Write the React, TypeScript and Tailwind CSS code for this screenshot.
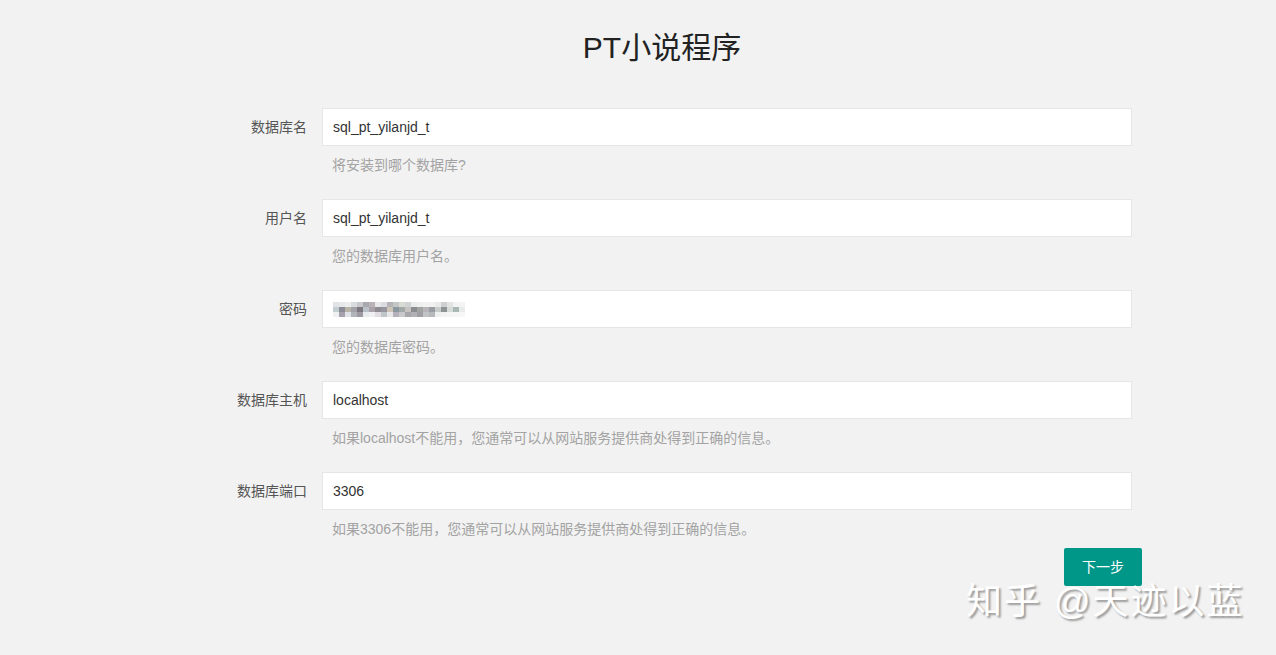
const fields = [
  { label: "数据库名", value: "sql_pt_yilanjd_t", hint: "将安装到哪个数据库?" },
  { label: "用户名", value: "sql_pt_yilanjd_t", hint: "您的数据库用户名。" },
  { label: "密码", value: "", hint: "您的数据库密码。", masked: true },
  { label: "数据库主机", value: "localhost", hint: "如果localhost不能用，您通常可以从网站服务提供商处得到正确的信息。" },
  { label: "数据库端口", value: "3306", hint: "如果3306不能用，您通常可以从网站服务提供商处得到正确的信息。" },
];

// pixelated blur of the password value
const blurTop = ["#dfe3e6", "#e6e8ea", "#eceeee", "#d8dcdf", "#c7c9cc", "#a8a8b0", "#b9b2b7", "#e8e8ea", "#dadcdf", "#b5b3b8", "#c2c6c4", "#d9dbd5", "#cfd3d4", "#e9ebec", "#eef0ef", "#f2f2f2", "#f1f1f1", "#eaeaea", "#cfd0d1", "#e2e4e4", "#f3f3f3", "#f4f4f4"];
const blurMid = ["#c3cdd2", "#8c8c98", "#b8b5a8", "#a3a1a8", "#7d7880", "#b8c2c8", "#a9a2aa", "#8e8b93", "#9795a0", "#ccc4b4", "#8c98a0", "#a1a9a9", "#c5c4c2", "#8a8c90", "#a0a4a2", "#b7b5ba", "#9a9ea4", "#c8ccca", "#8e9494", "#d7dcd8", "#aab8b5", "#e7ebea"];
const blurBot = ["#eef0f1", "#a7a0ad", "#dfe2e6", "#b2b4bc", "#9e9aa3", "#e9ecef", "#f0f0f2", "#e2dce3", "#bfc6ca", "#e8e8ea", "#b6b0bb", "#c9c9cc", "#a7a7ac", "#b2b2b6", "#a0a0a4", "#c2c3c5", "#b5b9bb", "#eef0f0", "#f2f2f2", "#f5f5f5", "#f6f6f6", "#f7f7f7"];

function Masked() {
  return (
    <div className="flex flex-col">
      {[blurTop, blurMid, blurBot].map((row, r) => (
        <div key={r} className="flex">
          {row.map((c, i) => (
            <span key={i} className="block w-[6px] h-[5px]" style={{ background: c }} />
          ))}
        </div>
      ))}
    </div>
  );
}

export default function App() {
  return (
    <div
      className="relative w-full min-h-[655px] bg-[#f2f2f2] overflow-hidden"
      style={{ fontFamily: '"Liberation Sans", "Noto Sans CJK SC", sans-serif' }}
    >
      <div className="ml-[212px] w-[930px] pt-[30px]">
        <h1 className="w-[900px] text-center text-[30px] leading-[36px] text-[#222]">PT小说程序</h1>

        <div className="mt-[42px]">
          {fields.map((f) => (
            <div key={f.label} className="flex flex-col">
              <div className="flex items-center">
                <label className="w-[110px] pr-[15px] text-right text-[14px] text-[#555]">{f.label}</label>
                <div className="w-[810px] h-[38px] bg-white border border-[#e6e6e6] flex items-center pl-[10px] text-[14px] text-[#333]">
                  {f.masked ? <Masked /> : f.value}
                </div>
              </div>
              <div className="ml-[120px] mt-[9px] mb-[24px] leading-[20px] text-[14px] text-[#a3a3a3]">{f.hint}</div>
            </div>
          ))}
        </div>

        <div className="flex justify-end -mt-[15px]">
          <button className="w-[78px] h-[38px] bg-[#009688] text-white text-[14px] rounded-[2px]">下一步</button>
        </div>
      </div>

      <div className="absolute left-[966px] top-[580px] text-[36px] leading-[44px] tracking-[2px] text-white [text-shadow:2px_2px_2px_#9a9a9a]">
        知乎 @天迹以蓝
      </div>
    </div>
  );
}
